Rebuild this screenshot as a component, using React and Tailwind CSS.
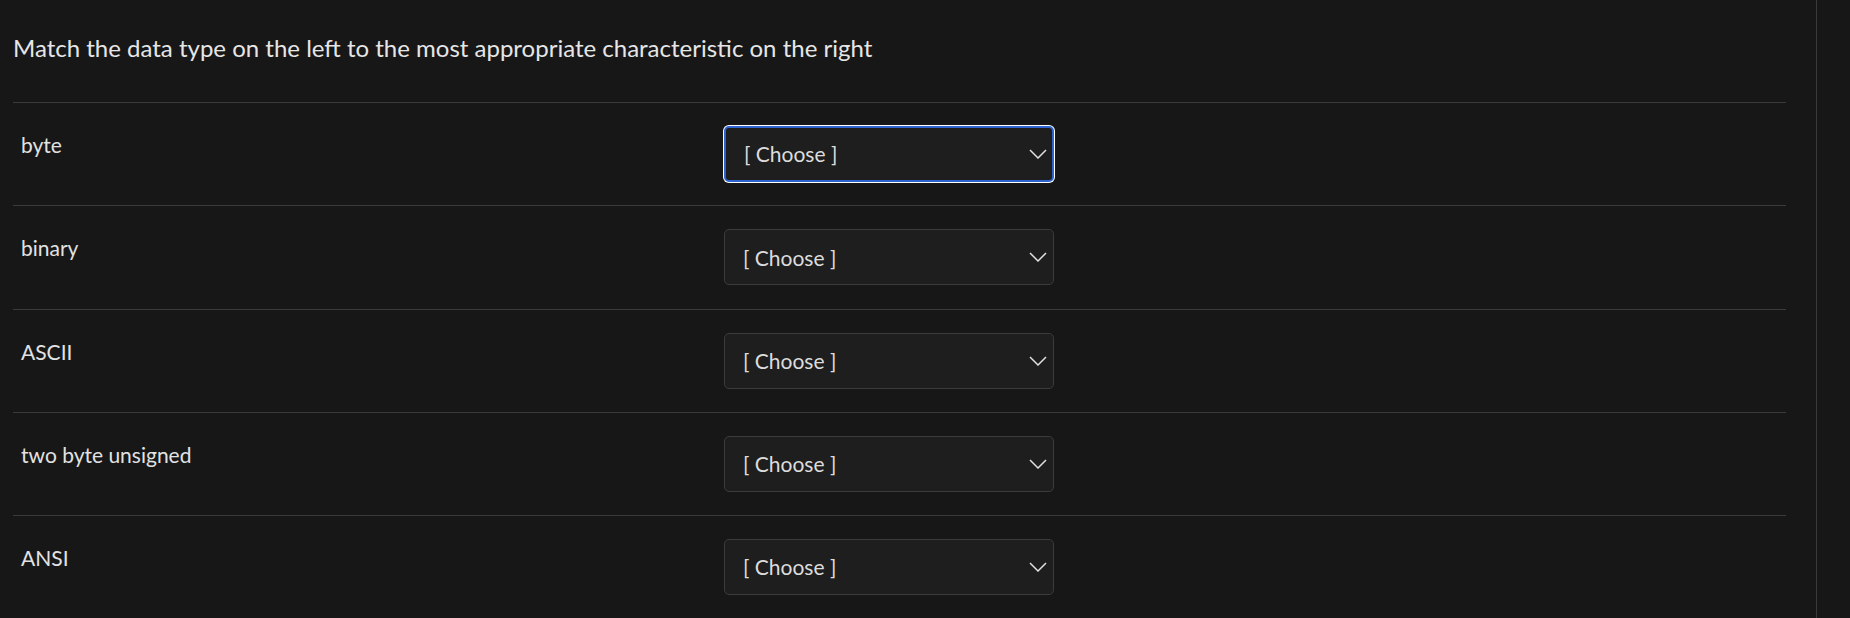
import { useState } from 'react'

// Pregunta de emparejamiento: tipo de dato a la izquierda, característica a la derecha
const TIPOS = ['byte', 'binary', 'ASCII', 'two byte unsigned', 'ANSI']

const OPCIONES = [
  'Stores a single value from 0 to 255',
  'Only 0 and 1',
  '7-bit character encoding',
  'Values from 0 to 65535',
  '8-bit character encoding',
]

function Chevron() {
  return (
    <svg
      width="18"
      height="10"
      viewBox="0 0 18 10"
      fill="none"
      className="pointer-events-none absolute right-[7px] top-1/2 -translate-y-1/2"
    >
      <path d="M1 1l8 8 8-8" stroke="#e0e0e0" strokeWidth="1.5" />
    </svg>
  )
}

export default function App() {
  const [respuestas, setRespuestas] = useState(TIPOS.map(() => ''))

  function handleChange(i, valor) {
    const nuevas = [...respuestas]
    nuevas[i] = valor
    setRespuestas(nuevas)
  }

  return (
    <div className="flex min-h-[618px] bg-[#171717] font-['Lato',sans-serif]">
      <div className="w-[1817px] shrink-0 border-r border-[#3a3a3a] pl-[13px] pr-[30px]">
        <p className="h-[102px] pt-[30px] text-[24px] leading-[36px] text-[#e6e6e6]">
          Match the data type on the left to the most appropriate characteristic on the right
        </p>

        {TIPOS.map((tipo, i) => (
          <div key={tipo} className="flex border-t border-[#3a3a3a] pt-[23px] pb-[23.3px]">
            <div className="w-[711px] shrink-0 pl-[8px] pt-[4px] text-[21px] leading-[30px] text-[#e2e2e2]">
              {tipo}
            </div>
            <div className="relative h-[56px] w-[330px]">
              <select
                value={respuestas[i]}
                onChange={(e) => handleChange(i, e.target.value)}
                className={`h-full w-full appearance-none rounded-[5px] bg-[#1e1e1e] pl-[18px] pr-8 text-[21px] text-[#dcdcdc] outline-none ${
                  i === 0
                    ? 'border-2 border-[#2d64cf] ring-1 ring-white'
                    : 'border border-[#3c3c3c]'
                }`}
              >
                <option value="">[ Choose ]</option>
                {OPCIONES.map((o) => (
                  <option key={o} value={o}>{o}</option>
                ))}
              </select>
              <Chevron />
            </div>
          </div>
        ))}
      </div>
      <div className="flex-1" />
    </div>
  )
}
